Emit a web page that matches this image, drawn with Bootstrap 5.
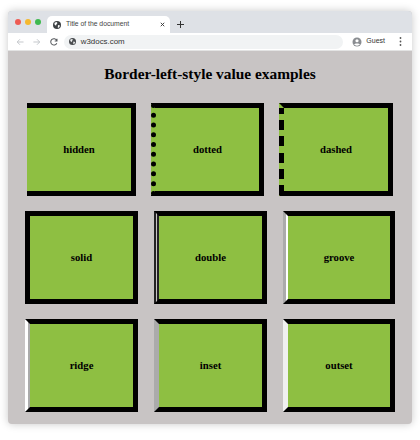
<!DOCTYPE html>
<html lang="en">
<head>
<meta charset="utf-8">
<title>Title of the document</title>
<link rel="stylesheet" href="https://cdn.jsdelivr.net/npm/bootstrap@5.3.0/dist/css/bootstrap.min.css">
<style>
html,body{margin:0;background:#fff;height:440px;overflow:hidden}
body{padding:11px 8px 16px;font-family:"Liberation Sans",Arial,sans-serif}
.win{width:404px;height:413px;border-radius:4px;overflow:hidden;box-shadow:0 0 8px rgba(0,0,0,.22);background:#c8c4c4}
.tabbar{height:22px;background:#dee1e6;padding-left:5px}
.dot{width:6px;height:6px;border-radius:50%}
.d-r{background:#ee5c54}.d-y{background:#f5b82e}.d-g{background:#3fb950}
.lights{gap:4px;margin-right:6px;margin-top:-1px;padding-left:2px}
.tab{width:123px;height:17px;margin-top:5px;background:#fff;border-radius:5px 5px 0 0;padding:0 5px 0 6px;font-size:6.8px;color:#444}
.tab svg{flex:none}
.lb{margin-left:5px}
.plus{margin-left:7px;margin-top:5px}
.toolbar{height:18px;background:#fff;padding:0 10px 0 8px;gap:9px;border-bottom:1px solid #e3e3e3}
.omni{width:282px;height:14px;margin-left:-3px;background:#f1f3f4;border-radius:7px;padding-left:5px;font-size:7.900px;color:#333}
.guest{font-size:7px;color:#333;margin-left:auto;gap:4px}
.kebab{margin-left:10px}
.page{padding-top:12px;font-family:"Liberation Serif","Times New Roman",serif;color:#000}
.ttl{font-size:15.4px;font-weight:700;line-height:22px;margin:0 0 18px;text-align:center}
.rowa,.rowb{display:grid;grid-template-rows:93px}
.rowa{grid-template-columns:109px 113px 114px;column-gap:15px;padding-left:19px;margin-bottom:15px}
.rowb{grid-template-columns:113px 113px 112px;column-gap:16px;padding-left:17px;margin-bottom:15px}
.bx{background:#8ebf42;border:5px solid #000;font-size:10.7px;font-weight:700}
.s-hidden{border-left-style:hidden}
.s-dotted{border-left-style:dotted}
.s-dashed{border-left:5px solid transparent;background:repeating-linear-gradient(180deg,#000 0 10px,transparent 10px 16.3px) 0 .7px/5px 100% no-repeat border-box,#8ebf42}
.s-double{border-left:5px double #222;background-clip:padding-box}
.s-groove{border-left:5px groove #fff}
.s-ridge{border-left:5px ridge #fff}
.s-inset{border-left:5px inset #fff}
.s-outset{border-left:5px outset #f0f0f0}
</style>
</head>
<body>
<div class="win d-flex flex-column">
  <div class="tabbar d-flex align-items-center flex-shrink-0">
    <div class="lights d-flex"><span class="dot d-r"></span><span class="dot d-y"></span><span class="dot d-g"></span></div>
    <div class="tab d-flex align-items-center">
      <svg width="8" height="8" viewBox="0 0 16 16"><circle cx="8" cy="8" r="8" fill="#3c4043"/><path d="M3 3.500 7 2l2 2-2 2.500-1 3L3 7zM10 8l4 1-2 4.500-2.500-.5z" fill="#fff"/></svg>
      <span class="lb flex-grow-1">Title of the document</span>
      <svg width="5" height="5" viewBox="0 0 10 10"><path d="M1.500 1.500l7 7m0-7l-7 7" stroke="#333" stroke-width="1.800" fill="none"/></svg>
    </div>
    <svg class="plus" width="7" height="7" viewBox="0 0 10 10"><path d="M5 0v10M0 5h10" stroke="#333" stroke-width="1.500" fill="none"/></svg>
  </div>
  <div class="toolbar d-flex align-items-center flex-shrink-0">
    <svg width="8" height="8" viewBox="0 0 10 10"><path d="M9.500 5H1.500M5 1.500L1.500 5 5 8.500" stroke="#c2c5c9" stroke-width="1.200" fill="none"/></svg>
    <svg width="8" height="8" viewBox="0 0 10 10"><path d="M.5 5h8M5 1.500L8.500 5 5 8.500" stroke="#c2c5c9" stroke-width="1.200" fill="none"/></svg>
    <svg width="8" height="8" viewBox="0 0 10 10"><path d="M8.600 6.500A4 4 0 1 1 8.500 3M8.800.8v2.800H6" stroke="#55585c" stroke-width="1.300" fill="none"/></svg>
    <div class="omni d-flex align-items-center">
      <svg width="7" height="7" viewBox="0 0 16 16"><circle cx="8" cy="8" r="8" fill="#4a4d50"/><path d="M3 3.500 7 2l2 2-2 2.500-1 3L3 7zM10 8l4 1-2 4.500-2.500-.5z" fill="#f1f3f4"/></svg>
      <span class="lb">w3docs.com</span>
    </div>
    <div class="guest d-flex align-items-center">
      <svg width="10" height="10" viewBox="0 0 20 20"><circle cx="10" cy="10" r="9" fill="#8a8d91"/><circle cx="10" cy="7.500" r="3.200" fill="#fff"/><path d="M4 15c1.500-3 10.500-3 12 0-3 3-9 3-12 0z" fill="#fff"/></svg>
      <span>Guest</span>
      <svg class="kebab" width="3" height="9" viewBox="0 0 3 9"><circle cx="1.500" cy="1" r=".9" fill="#555"/><circle cx="1.500" cy="4.500" r=".9" fill="#555"/><circle cx="1.500" cy="8" r=".9" fill="#555"/></svg>
    </div>
  </div>
  <div class="page flex-grow-1">
    <h1 class="ttl">Border-left-style value examples</h1>
    <div class="rowa">
      <div class="bx s-hidden d-flex align-items-center justify-content-center">hidden</div>
      <div class="bx s-dotted d-flex align-items-center justify-content-center">dotted</div>
      <div class="bx s-dashed d-flex align-items-center justify-content-center">dashed</div>
    </div>
    <div class="rowb">
      <div class="bx d-flex align-items-center justify-content-center">solid</div>
      <div class="bx s-double d-flex align-items-center justify-content-center">double</div>
      <div class="bx s-groove d-flex align-items-center justify-content-center">groove</div>
    </div>
    <div class="rowb">
      <div class="bx s-ridge d-flex align-items-center justify-content-center">ridge</div>
      <div class="bx s-inset d-flex align-items-center justify-content-center">inset</div>
      <div class="bx s-outset d-flex align-items-center justify-content-center">outset</div>
    </div>
  </div>
</div>
<script src="https://cdn.jsdelivr.net/npm/bootstrap@5.3.0/dist/js/bootstrap.bundle.min.js"></script>
</body>
</html>
